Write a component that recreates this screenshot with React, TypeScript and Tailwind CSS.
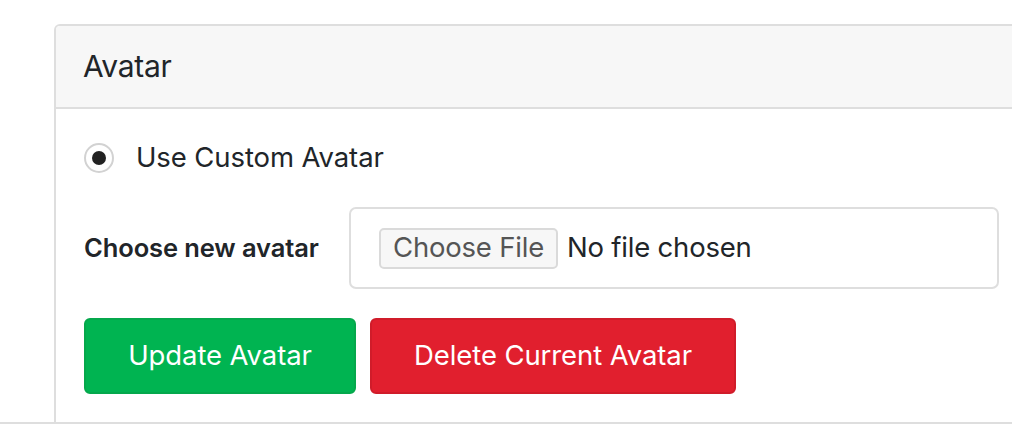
export default function App() {
  return (
    <div
      className="w-[1012px] h-[436px] overflow-hidden bg-white text-[#212529]"
      style={{ fontFamily: "Inter, 'Noto Sans', sans-serif" }}
    >
      <div className="pt-[24px] border-b-2 border-[#dedede]">
        <div className="ml-[54px] w-[990px] border-2 border-b-0 border-[#dedede] rounded-tl-[6px] overflow-hidden">
          {/* header */}
          <div className="h-[83px] bg-[#f7f7f7] border-b-2 border-[#dedede] flex items-center px-[27px]">
            <h5 className="text-[30px] font-normal tracking-[-0.3px]">Avatar</h5>
          </div>

          {/* body */}
          <div className="px-[28px] pt-[29px] pb-[28px] flex flex-col gap-[29px]">
            <label className="flex items-center h-[40px] gap-[22px]">
              <span className="w-[30px] h-[30px] rounded-full border-2 border-[#d2d2d2] flex items-center justify-center">
                <span className="w-[14px] h-[14px] rounded-full bg-[#222]" />
              </span>
              <span className="text-[27.5px] tracking-[-0.1px]">Use Custom Avatar</span>
            </label>

            <div className="flex items-center">
              <span className="w-[265px] text-[25.5px] font-semibold tracking-[-0.1px]">
                Choose new avatar
              </span>
              <div className="w-[650px] h-[82px] border-2 border-[#dedede] rounded-[7px] flex items-center pl-[28px] gap-[9px]">
                <span className="h-[41px] px-[12px] flex items-center rounded-[5px] border-2 border-[#dadada] bg-[#f7f7f7] text-[27.5px] text-[#555] tracking-[-0.2px]">
                  Choose File
                </span>
                <span className="text-[27.5px] tracking-[-0.2px]">No file chosen</span>
              </div>
            </div>

            <div className="flex gap-[14px]">
              <button className="w-[272px] h-[76px] rounded-[6px] bg-[#00b451] border-2 border-[#05a84c] text-white text-[27.5px] tracking-[-0.1px]">
                Update Avatar
              </button>
              <button className="w-[366px] h-[76px] rounded-[6px] bg-[#e11f2e] border-2 border-[#d01c2a] text-white text-[27.5px] tracking-[-0.1px]">
                Delete Current Avatar
              </button>
            </div>
          </div>
        </div>
      </div>
    </div>
  );
}
